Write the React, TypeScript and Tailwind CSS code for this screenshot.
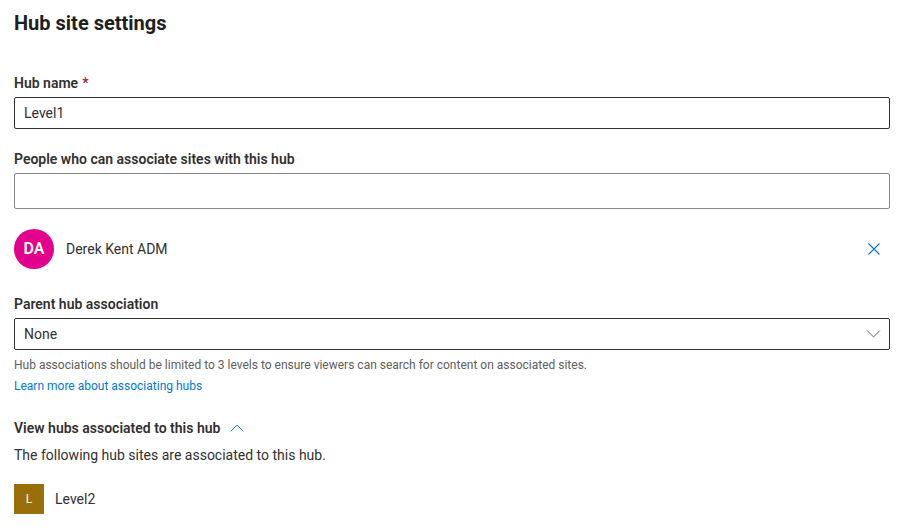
function Label({ children, required }: { children: React.ReactNode; required?: boolean }) {
  return (
    <div className="text-[14px] font-semibold leading-5 text-[#323130]">
      {children}
      {required && <span className="ml-1 text-[#a4262c]">*</span>}
    </div>
  );
}

function Chevron({ up, className }: { up?: boolean; className?: string }) {
  return (
    <svg viewBox="0 0 16 9" className={className} fill="none" stroke="currentColor" strokeWidth={1.1}>
      <path d={up ? "M1 8.2 8 1.2l7 7" : "M1 0.8l7 7 7-7"} />
    </svg>
  );
}

export default function App() {
  return (
    <div className="min-h-screen bg-white px-[14px] pt-[9px] font-['Roboto',sans-serif] text-[#323130]">
      <h1 className="text-[20px] font-bold leading-7 text-[#201f1e]">Hub site settings</h1>

      <div className="mt-[36px]">
        <Label required>Hub name</Label>
        <div className="mt-[4px] flex h-[32px] w-[876px] items-center rounded-[2px] border border-[#323130] px-[9px] text-[14px]">
          Level1
        </div>
      </div>

      <div className="mt-[20px]">
        <Label>People who can associate sites with this hub</Label>
        <div className="mt-[4px] h-[36px] w-[876px] rounded-[2px] border border-[#8a8886]" />
      </div>

      <div className="mt-[20px] flex w-[876px] items-center">
        <div className="flex h-[40px] w-[40px] items-center justify-center rounded-full bg-[#e3008c] text-[16px] font-semibold text-white">
          DA
        </div>
        <span className="ml-[12px] text-[14px] text-[#323130]">Derek Kent ADM</span>
        <svg viewBox="0 0 12 12" className="ml-auto mr-[10px] h-[12px] w-[12px] text-[#0078d4]" fill="none" stroke="currentColor" strokeWidth={1.1}>
          <path d="M0.5 0.5l11 11M11.5 0.5l-11 11" />
        </svg>
      </div>

      <div className="mt-[25px]">
        <Label>Parent hub association</Label>
        <div className="mt-[4px] flex h-[32px] w-[876px] items-center justify-between rounded-[2px] border border-[#323130] pl-[9px] pr-[8px] text-[14px]">
          <span>None</span>
          <Chevron className="h-[8px] w-[15px] text-[#605e5c]" />
        </div>
        <p className="mt-[7px] text-[12px] leading-4 text-[#605e5c]">
          Hub associations should be limited to 3 levels to ensure viewers can search for content on associated sites.
        </p>
        <a className="mt-[5px] block text-[12px] leading-4 text-[#0078d4]">Learn more about associating hubs</a>
      </div>

      <div className="mt-[24px] flex items-center gap-[9px]">
        <Label>View hubs associated to this hub</Label>
        <Chevron up className="h-[8px] w-[16px] text-[#0078d4]" />
      </div>
      <p className="mt-[7px] text-[14px] leading-5 text-[#323130]">The following hub sites are associated to this hub.</p>

      <div className="mt-[19px] flex items-center">
        <div className="flex h-[30px] w-[30px] items-center justify-center bg-[#986f0b] text-[12px] text-white">L</div>
        <span className="ml-[11px] text-[14px] text-[#323130]">Level2</span>
      </div>
    </div>
  );
}
